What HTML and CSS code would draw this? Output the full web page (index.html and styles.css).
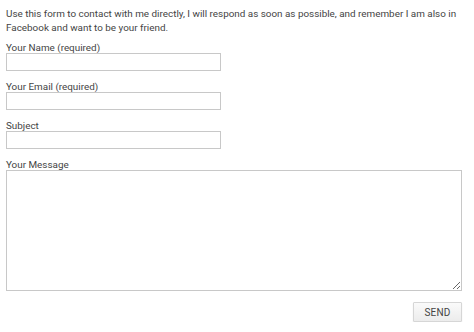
FILE: index.html
```html
<!DOCTYPE html>
<html>
<head>
<meta charset="utf-8">
<link rel="stylesheet" href="styles.css">
</head>
<body>
<div class="page">
  <p class="intro">Use this form to contact with me directly, I will respond as soon as possible, and remember I am also in Facebook and want to be your friend.</p>
  <form class="form">
    <div class="field">
      <label class="label">Your Name (required)</label>
      <input class="input" type="text">
    </div>
    <div class="field">
      <label class="label">Your Email (required)</label>
      <input class="input" type="text">
    </div>
    <div class="field">
      <label class="label">Subject</label>
      <input class="input" type="text">
    </div>
    <div class="field">
      <label class="label">Your Message</label>
      <textarea class="textarea"></textarea>
    </div>
    <div class="actions">
      <button class="send" type="button">SEND</button>
    </div>
  </form>
</div>
</body>
</html>
```
FILE: styles.css
```css
html, body {
  margin: 0;
  padding: 0;
  background: #fff;
}
body {
  font-family: Roboto, "Liberation Sans", sans-serif;
  font-size: 9.9px;
  line-height: 14px;
  color: #444;
}
.page {
  padding: 7px 12px 0 6px;
}
.intro {
  margin: 0 0 4px 0;
}
.form {
  display: flex;
  flex-direction: column;
}
.field {
  display: flex;
  flex-direction: column;
  align-items: flex-start;
  margin-bottom: 7px;
}
.label {
  display: block;
  height: 14px;
  line-height: 17px;
}
.input {
  box-sizing: border-box;
  width: 215px;
  height: 18px;
  margin: 0;
  border: 1px solid #c8c8c8;
  background: #fff;
  padding: 0 3px;
  font: inherit;
}
.textarea {
  box-sizing: border-box;
  width: 456px;
  height: 121px;
  margin: 0;
  border: 1px solid #c8c8c8;
  background: #fff;
  font: inherit;
  resize: vertical;
}
.actions {
  display: flex;
  justify-content: flex-end;
  width: 456px;
  margin-top: 4px;
}
.send {
  box-sizing: border-box;
  width: 49px;
  height: 20px;
  margin: 0;
  padding: 0;
  border: 1px solid #d6d6d6;
  border-radius: 1px;
  background: linear-gradient(#fafafa, #ececec);
  box-shadow: 0 1px 1px rgba(0,0,0,0.18);
  font-family: Roboto, "Liberation Sans", sans-serif;
  font-size: 10px;
  color: #444;
  letter-spacing: 0.2px;
}
```
